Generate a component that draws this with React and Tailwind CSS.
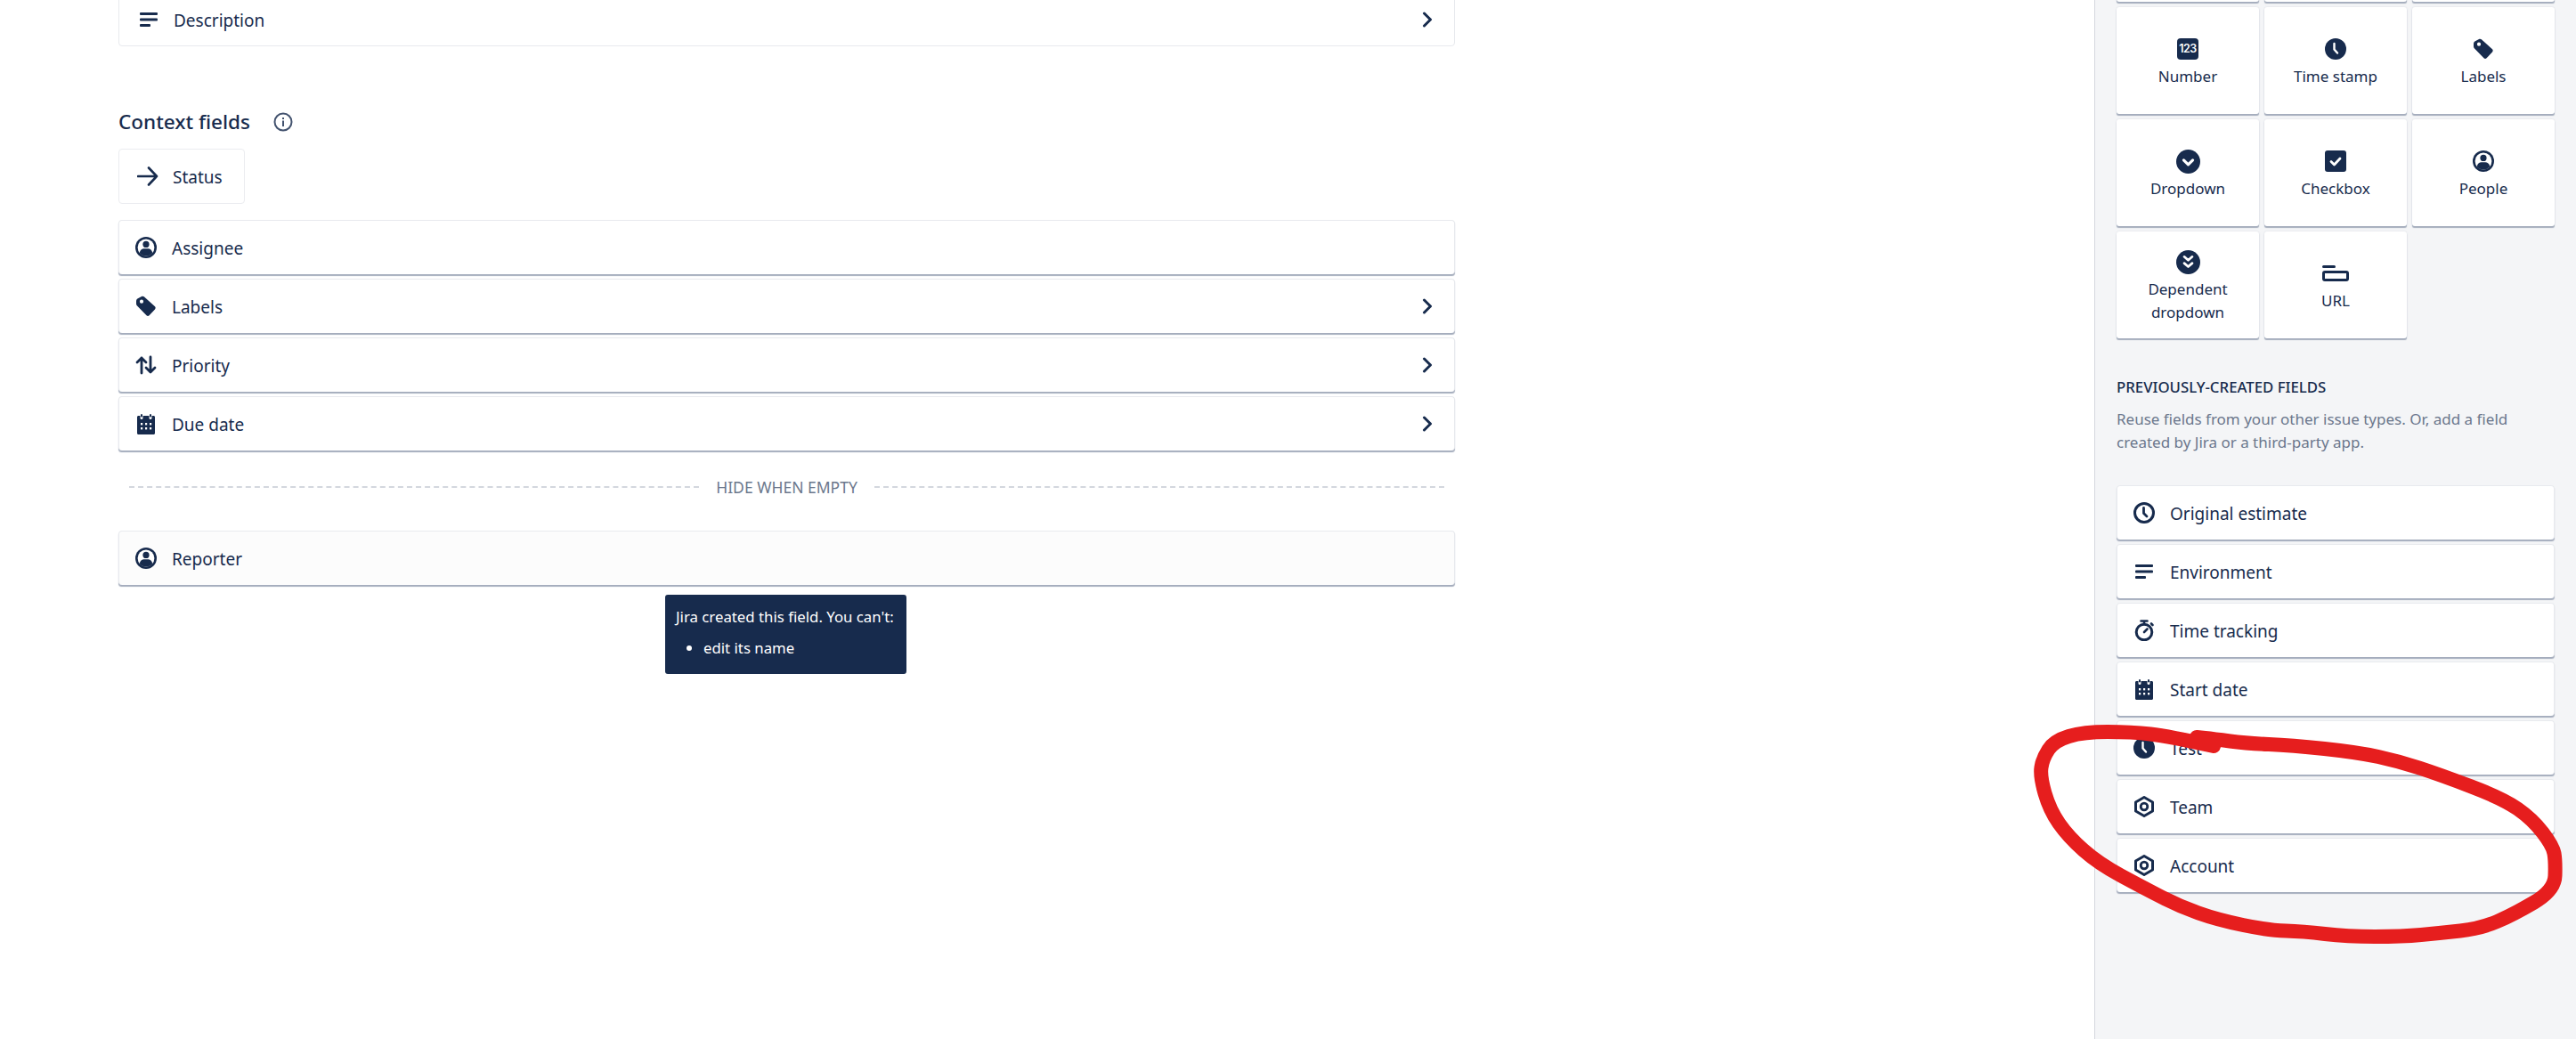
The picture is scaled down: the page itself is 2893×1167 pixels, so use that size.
const ink = "#172b4d";

function Ico({ children, className = "w-6 h-6" }) {
  return (
    <svg viewBox="0 0 24 24" className={`${className} shrink-0`} fill="none">
      {children}
    </svg>
  );
}

const Lines = () => (
  <Ico>
    <rect x="2" y="4" width="20" height="3" rx="1" fill={ink} />
    <rect x="2" y="10.5" width="20" height="3" rx="1" fill={ink} />
    <rect x="2" y="17" width="12" height="3" rx="1" fill={ink} />
  </Ico>
);

const Person = () => (
  <Ico>
    <circle cx="12" cy="12" r="12" fill={ink} />
    <circle cx="12" cy="12" r="9.4" fill="#fff" />
    <circle cx="12" cy="8.4" r="3.6" fill={ink} />
    <path d="M4.8 18.2c.3-3.2 2.6-5 5-5h4.400c2.400 0 4.700 1.800 5 5a9.600 9.600 0 0 1-14.400 0z" fill={ink} />
  </Ico>
);

const Tag = () => (
  <Ico>
    <path
      fillRule="evenodd"
      d="M1 6.500C1 5 1.600 4 2.800 3.300L7 1c1-.5 2-.4 2.800.3l12.200 11c.9.9.9 2.200 0 3.100l-6.400 6.900c-.9.9-2.200.9-3.100 0L1.800 11.200C1.200 10.500 1 9.800 1 9zM7 8.800a2.100 2.100 0 1 0 0-4.200 2.100 2.100 0 0 0 0 4.200z"
      fill={ink}
    />
  </Ico>
);

const UpDown = () => (
  <Ico>
    <path d="M7 21V4M2 9l5-5 5 5" stroke={ink} strokeWidth="2.800" strokeLinecap="round" strokeLinejoin="round" />
    <path d="M17 3v17M12 15l5 5 5-5" stroke={ink} strokeWidth="2.800" strokeLinecap="round" strokeLinejoin="round" />
  </Ico>
);

const Calendar = () => (
  <Ico>
    <path
      d="M3.500 3H5.500v2.500a1.500 1.500 0 0 0 3 0V3h7v2.500a1.500 1.500 0 0 0 3 0V3h2C21.400 3 22 3.600 22 4.500v18c0 .9-.6 1.500-1.500 1.500h-17C2.600 24 2 23.400 2 22.500v-18C2 3.600 2.600 3 3.500 3z"
      fill={ink}
    />
    <rect x="6" y="1" width="2" height="3.500" rx="1" fill={ink} />
    <rect x="16" y="1" width="2" height="3.500" rx="1" fill={ink} />
    <g fill="#fff">
      {[6, 11, 16].map((x) =>
        [11, 16].map((y) => <rect key={`${x}-${y}`} x={x} y={y} width="2.200" height="2.400" />)
      )}
    </g>
  </Ico>
);

const ClockFill = () => (
  <Ico>
    <circle cx="12" cy="12" r="12" fill={ink} />
    <path d="M10.500 6v6.500l3.500 4" stroke="#fff" strokeWidth="2.400" strokeLinecap="round" strokeLinejoin="round" />
  </Ico>
);

const ClockLine = () => (
  <Ico>
    <circle cx="12" cy="12" r="10.500" stroke={ink} strokeWidth="3" />
    <path d="M11.500 6.500v6l3.500 3.500" stroke={ink} strokeWidth="2.800" strokeLinecap="round" strokeLinejoin="round" />
  </Ico>
);

const Stopwatch = () => (
  <Ico>
    <circle cx="12" cy="14" r="8.800" stroke={ink} strokeWidth="3" />
    <path d="M8.500 1.500h7M12 2v3M12 14l3.500-3.500M20 4.500l1.500 1.500" stroke={ink} strokeWidth="2.600" strokeLinecap="round" />
  </Ico>
);

const Hex = () => (
  <Ico>
    <path d="M12 1.500l9.500 5.500v10l-9.500 5.500-9.500-5.500V7z" stroke={ink} strokeWidth="3" strokeLinejoin="round" />
    <circle cx="12" cy="12" r="3.800" stroke={ink} strokeWidth="2.800" />
  </Ico>
);

const Number123 = () => (
  <div className="w-6 h-6 rounded-[4px] bg-[#172b4d] text-white flex items-center justify-center text-[12.500px] leading-none font-semibold font-['Inter',sans-serif] tracking-[-0.5px]">
    123
  </div>
);

const CircleDown = () => (
  <Ico className="w-[27px] h-[27px]">
    <circle cx="12" cy="12" r="12" fill={ink} />
    <path d="M7.500 10.500l4.500 4.500 4.500-4.500" stroke="#fff" strokeWidth="2.800" strokeLinecap="round" strokeLinejoin="round" />
  </Ico>
);

const CircleDouble = () => (
  <Ico className="w-[27px] h-[27px]">
    <circle cx="12" cy="12" r="12" fill={ink} />
    <path d="M8 6.500l4 3.500 4-3.500M8 13l4 3.500 4-3.500" stroke="#fff" strokeWidth="2.400" strokeLinecap="round" strokeLinejoin="round" />
  </Ico>
);

const CheckSquare = () => (
  <Ico>
    <rect width="24" height="24" rx="3" fill={ink} />
    <path d="M7 12.500l3.500 3.500 6.500-7" stroke="#fff" strokeWidth="2.800" strokeLinecap="round" strokeLinejoin="round" />
  </Ico>
);

const UrlField = () => (
  <svg viewBox="0 0 30 18" className="w-[30px] h-[18px] shrink-0" fill="none">
    <rect x="0" y="0" width="15" height="3" rx="1.500" fill={ink} />
    <rect x="1.500" y="7.500" width="27" height="9" rx="1.500" stroke={ink} strokeWidth="3" />
  </svg>
);

const Arrow = () => (
  <Ico>
    <path d="M1 12h21M13 2.500L22 12l-9 9.500" stroke={ink} strokeWidth="2.600" strokeLinecap="round" strokeLinejoin="round" />
  </Ico>
);

const Chevron = () => (
  <svg viewBox="0 0 12 18" className="w-3 h-[18px] shrink-0 ml-auto" fill="none">
    <path d="M2.500 2l7 7-7 7" stroke={ink} strokeWidth="3" strokeLinecap="round" strokeLinejoin="round" />
  </svg>
);

function FieldRow({ icon, label, chevron, tint }) {
  return (
    <div className={`h-[61px] flex items-center pl-[18px] pr-[24px] gap-[17px] rounded-[4px] border border-[#e8eaee] border-b-0 shadow-[0_2px_1px_-0.5px_#a5adbd] text-[19px] text-[#172b4d] ${tint ? "bg-[#fcfcfc]" : "bg-white"}`}>
      {icon}
      <span className="pt-[3px]">{label}</span>
      {chevron && <Chevron />}
    </div>
  );
}

function TypeCard({ icon, label }) {
  return (
    <div className="h-[120px] bg-white rounded-[3px] shadow-[0_2px_1px_-0.5px_#a5adbd,0_0_2px_#d5d8de] flex flex-col items-center justify-center gap-[2px] pt-[2px] text-center leading-[26px] text-[#172b4d]">
      <div className="w-8 h-8 flex items-center justify-center">{icon}</div>
      <div>{label}</div>
    </div>
  );
}

const previous = [
  ["Original estimate", <ClockLine />],
  ["Environment", <Lines />],
  ["Time tracking", <Stopwatch />],
  ["Start date", <Calendar />],
  ["Test", <ClockFill />],
  ["Team", <Hex />],
  ["Account", <Hex />],
];

const scribble = [
  [246, 58], [196, 47], [154, 42], [100, 42], [67, 52], [54, 72], [51, 92], [62, 130], [83, 160],
  [117, 190], [167, 217], [208, 238], [250, 253], [308, 265], [346, 266], [396, 272], [458, 272],
  [500, 268], [546, 263], [583, 247], [629, 220], [630, 187], [627, 170], [604, 140], [571, 117],
  [500, 90], [454, 75], [408, 65], [333, 57], [283, 55], [246, 50], [227, 48],
];

// rounds the marker line off through the midpoints
function smooth(points) {
  let d = `M${points[0].join(" ")}`;
  for (let i = 1; i < points.length - 1; i++) {
    const [x, y] = points[i];
    const [nx, ny] = points[i + 1];
    d += ` Q${x} ${y} ${(x + nx) / 2} ${(y + ny) / 2}`;
  }
  return `${d} L${points[points.length - 1].join(" ")}`;
}

export default function App() {
  return (
    <div className="relative w-[2893px] h-[1167px] overflow-hidden flex bg-white font-['Noto_Sans',sans-serif] text-[17px]">
      {/* Main column, scrolled so the description card is cut off at the top */}
      <main className="flex-1 pl-[133px]">
        <div className="w-[1501px] -mt-[9px]">
          <div className="h-[61px] flex items-center pl-[21px] pr-[24px] gap-[16px] rounded-[4px] border border-[#e8eaee] text-[19px] text-[#172b4d]">
            <Lines />
            <span className="pt-[3px]">Description</span>
            <Chevron />
          </div>

          <div className="mt-[70px] h-[30px] flex items-center gap-[26px]">
            <h2 className="text-[22.500px] font-medium text-[#172b4d]">Context fields</h2>
            <svg viewBox="0 0 22 22" className="w-[22px] h-[22px]" fill="none">
              <circle cx="11" cy="11" r="9.500" stroke="#42526e" strokeWidth="2" />
              <rect x="10" y="9.500" width="2" height="6.500" fill="#42526e" />
              <rect x="10" y="6" width="2" height="2" fill="#42526e" />
            </svg>
          </div>

          <div className="mt-[15px] w-[142px] h-[62px] flex items-center pl-[20px] gap-[16px] rounded-[4px] border border-[#ebecf0] text-[19px] text-[#172b4d]">
            <Arrow />
            <span className="pt-[3px]">Status</span>
          </div>

          <div className="mt-[18px] flex flex-col gap-[5px]">
            <FieldRow icon={<Person />} label="Assignee" />
            <FieldRow icon={<Tag />} label="Labels" chevron />
            <FieldRow icon={<UpDown />} label="Priority" chevron />
            <FieldRow icon={<Calendar />} label="Due date" chevron />
          </div>

          <div className="mt-[28px] flex items-center px-[12px] gap-[19px] h-[26px]">
            <div className="flex-1 border-t-2 border-dashed border-[#d3d7de]" />
            <span className="text-[17.500px] text-[#6b778c]">HIDE WHEN EMPTY</span>
            <div className="flex-1 border-t-2 border-dashed border-[#d3d7de]" />
          </div>

          <div className="mt-[36px]">
            <FieldRow icon={<Person />} label="Reporter" tint />
          </div>

          <div className="mt-[11px] ml-[614px] w-[271px] h-[89px] rounded-[3px] bg-[#172b4d] text-white text-[16.800px] pl-[12px] pt-[12px] leading-[26px] whitespace-nowrap">
            <p>Jira created this field. You can't:</p>
            <ul className="mt-[9px] list-disc pl-[31px]">
              <li>edit its name</li>
            </ul>
          </div>
        </div>
      </main>

      {/* Right panel, also scrolled */}
      <aside className="w-[541px] h-full bg-[#f4f5f7] border-l border-[#d4d7dd] pl-[24px] pr-[24px]">
        <div className="-mt-[118px] grid grid-cols-3 gap-[6px]">
          <TypeCard icon={null} label="" />
          <TypeCard icon={null} label="" />
          <TypeCard icon={null} label="" />
          <TypeCard icon={<Number123 />} label="Number" />
          <TypeCard icon={<ClockFill />} label="Time stamp" />
          <TypeCard icon={<Tag />} label="Labels" />
          <TypeCard icon={<CircleDown />} label="Dropdown" />
          <TypeCard icon={<CheckSquare />} label="Checkbox" />
          <TypeCard icon={<Person />} label="People" />
          <TypeCard icon={<CircleDouble />} label={<>Dependent<br />dropdown</>} />
          <TypeCard icon={<UrlField />} label="URL" />
        </div>

        <h3 className="mt-[43px] text-[16.800px] font-medium leading-[24px] text-[#172b4d]">PREVIOUSLY-CREATED FIELDS</h3>
        <p className="mt-[11px] text-[17px] leading-[26px] text-[#6b778c] whitespace-nowrap">
          Reuse fields from your other issue types. Or, add a field
          <br />
          created by Jira or a third-party app.
        </p>

        <div className="mt-[35px] flex flex-col gap-[5px]">
          {previous.map(([label, icon]) => (
            <FieldRow key={label} icon={icon} label={label} />
          ))}
        </div>
      </aside>

      {/* Red marker scribble on top of the screenshot */}
      <svg viewBox="0 0 653 387" className="absolute left-[2240px] top-[780px] w-[653px] h-[387px] pointer-events-none" fill="none">
        <path d={smooth(scribble)} stroke="#e61e1e" strokeWidth="16" strokeLinecap="round" strokeLinejoin="round" />
      </svg>
    </div>
  );
}
